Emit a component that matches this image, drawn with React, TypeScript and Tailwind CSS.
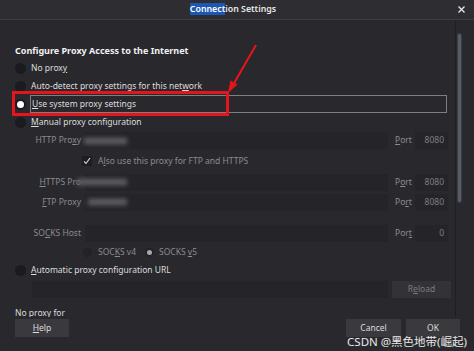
import React from "react";

const ul = (s: string) => <span className="underline underline-offset-[1px]">{s}</span>;

function Radio({ checked = false, small = false }: { checked?: boolean; small?: boolean }) {
  if (small) {
    return (
      <span className="flex h-[9px] w-[9px] shrink-0 items-center justify-center rounded-full bg-[#232327]">
        {checked && <span className="h-[5px] w-[5px] rounded-full bg-[#a8a8ac]" />}
      </span>
    );
  }
  return (
    <span className="flex h-[11px] w-[11px] shrink-0 items-center justify-center rounded-full bg-[#1b1b1f]">
      {checked && <span className="h-[7px] w-[7px] rounded-full bg-white" />}
    </span>
  );
}

function ProxyRow({
  label,
  port,
  value = "8080",
  tall = true,
  blur,
}: {
  label: React.ReactNode;
  port: React.ReactNode;
  value?: string;
  tall?: boolean;
  blur?: string;
}) {
  return (
    <div className={`relative flex items-center ${tall ? "h-[20px]" : "h-[19px]"}`}>
      <div className="w-[70px] pr-[4px] text-right text-[#8b8b8f]">{label}</div>
      <div className="h-[17px] w-[303px] bg-[#252529]" />
      <div className="w-[27px] pl-[7px] text-[#8b8b8f]">{port}</div>
      <div className="flex h-[17px] w-[33px] items-center justify-end bg-[#252529] pr-[4px] text-[#7e7e82]">{value}</div>
      {/* blurred-out host name */}
      {blur && <span className={`absolute top-1/2 h-[7px] -translate-y-1/2 bg-[#5a5a5f] blur-[2px] ${blur}`} />}
    </div>
  );
}

export default function App() {
  return (
    <div className="relative h-[351px] w-[474px] overflow-hidden bg-[#29292d] font-['Noto_Sans',sans-serif] text-[8.5px] leading-none text-[#dcdcdf]">
      {/* title bar */}
      <div className="relative flex h-[20px] items-center justify-center border-b border-[#3c3c41] bg-[#2e2e32] text-[8.8px] font-semibold text-[#e6e6e8]">
        <span className="-ml-[8px]">
          <span className="bg-[#1d57b4] text-white">Connect</span>ion Settings
        </span>
        <svg className="absolute right-[9px] top-[6px]" width="7" height="7" viewBox="0 0 7 7">
          <path d="M0.5 0.5 L6.5 6.5 M6.5 0.5 L0.5 6.5" stroke="#e8e8ea" strokeWidth="1.3" />
        </svg>
      </div>

      {/* scrollable area */}
      <div className="flex h-[297px]">
        <div className="w-[455px] overflow-hidden pl-[15px] pt-[23px]">
          <div className="flex h-[14px] items-center text-[9px] font-bold text-[#f0f0f2]">Configure Proxy Access to the Internet</div>

          <div className="mt-[2px] flex h-[18px] items-center">
            <Radio />
            <span className="ml-[5px]">No prox{ul("y")}</span>
          </div>
          <div className="flex h-[18px] items-center">
            <Radio />
            <span className="ml-[5px]">Auto-detect proxy settings for this net{ul("w")}ork</span>
          </div>
          <div className="flex h-[18px] items-center">
            <Radio checked />
            <span className="ml-[4px] flex h-[18px] w-[417px] items-center border border-[#7f7f83] pl-[1px]">{ul("U")}se system proxy settings</span>
          </div>
          <div className="flex h-[18px] items-center">
            <Radio />
            <span className="ml-[5px]">{ul("M")}anual proxy configuration</span>
          </div>

          <ProxyRow tall={false} label={<>HTTP Pro{ul("x")}y</>} port={<>{ul("P")}ort</>} blur="left-[69px] w-[43px]" />
          <div className="flex h-[22px] items-center">
            <span className="ml-[67px] flex h-[10px] w-[10px] items-center justify-center bg-[#1e1e22]">
              <svg width="8" height="8" viewBox="0 0 8 8">
                <path d="M1 4.3 L3 6.5 L7 1" fill="none" stroke="#e2e2e4" strokeWidth="1.1" />
              </svg>
            </span>
            <span className="ml-[6px] text-[#8b8b8f]">A{ul("l")}so use this proxy for FTP and HTTPS</span>
          </div>
          <ProxyRow label={<>{ul("H")}TTPS Pro</>} port={<>P{ul("o")}rt</>} blur="left-[62px] w-[50px]" />
          <ProxyRow label={<>{ul("F")}TP Proxy</>} port={<>Po{ul("r")}t</>} blur="left-[73px] w-[39px]" />

          <div className="mt-[11px]">
            <ProxyRow label={<>SO{ul("C")}KS Host</>} port={<>Por{ul("t")}</>} value="0" />
          </div>
          <div className="flex h-[18px] items-center text-[#8b8b8f]">
            <span className="ml-[68px]">
              <Radio small />
            </span>
            <span className="ml-[6px]">SOC{ul("K")}S v4</span>
            <span className="ml-[9px]">
              <Radio small checked />
            </span>
            <span className="ml-[5px]">SOCKS {ul("v")}5</span>
          </div>

          <div className="flex h-[18px] items-center">
            <Radio />
            <span className="ml-[5px]">{ul("A")}utomatic proxy configuration URL</span>
          </div>
          <div className="mt-[1px] flex h-[19px] items-center">
            <div className="ml-[17px] h-[17px] w-[356px] bg-[#252529]" />
            <div className="ml-[4px] flex h-[17px] w-[59px] items-center justify-center bg-[#333337] text-[#7a7a7e]">
              R{ul("e")}load
            </div>
          </div>

          <div className="mt-[8px] flex h-[12px] items-center">No proxy for</div>
        </div>
        <div className="flex w-[8px] justify-center border-l border-[#1f1f23]">
          <div className="mt-[13px] h-[170px] w-[5px] rounded-full border border-[#3a3d45] bg-[#565b67]" />
        </div>
      </div>

      {/* footer */}
      <div className="flex items-start pl-[15px] pr-[14px] pt-[2px]">
        <div className="flex h-[18px] w-[54px] items-center justify-center bg-[#3a3a3e]">{ul("H")}elp</div>
        <div className="ml-auto flex h-[18px] w-[55px] items-center justify-center bg-[#3a3a3e]">Cancel</div>
        <div className="ml-[5px] flex h-[18px] w-[54px] items-center justify-center bg-[#3a3a3e]">OK</div>
      </div>

      {/* red annotation */}
      <div className="absolute left-[12px] top-[91px] h-[25px] w-[217px] border-[3px] border-[#e8141c]" />
      <svg className="absolute left-0 top-0" width="474" height="351" viewBox="0 0 474 351">
        <line x1="256" y1="45" x2="233" y2="85" stroke="#e8141c" strokeWidth="2" />
        <polygon points="228,93 237.5,84.5 230.5,80.5" fill="#e8141c" />
      </svg>

      {/* watermark */}
      <div className="absolute bottom-[4px] right-[7px] font-['Noto_Sans','Noto_Sans_CJK_SC',sans-serif] text-[11.5px] text-white/90">
        CSDN @黑色地带(崛起)
      </div>
    </div>
  );
}
